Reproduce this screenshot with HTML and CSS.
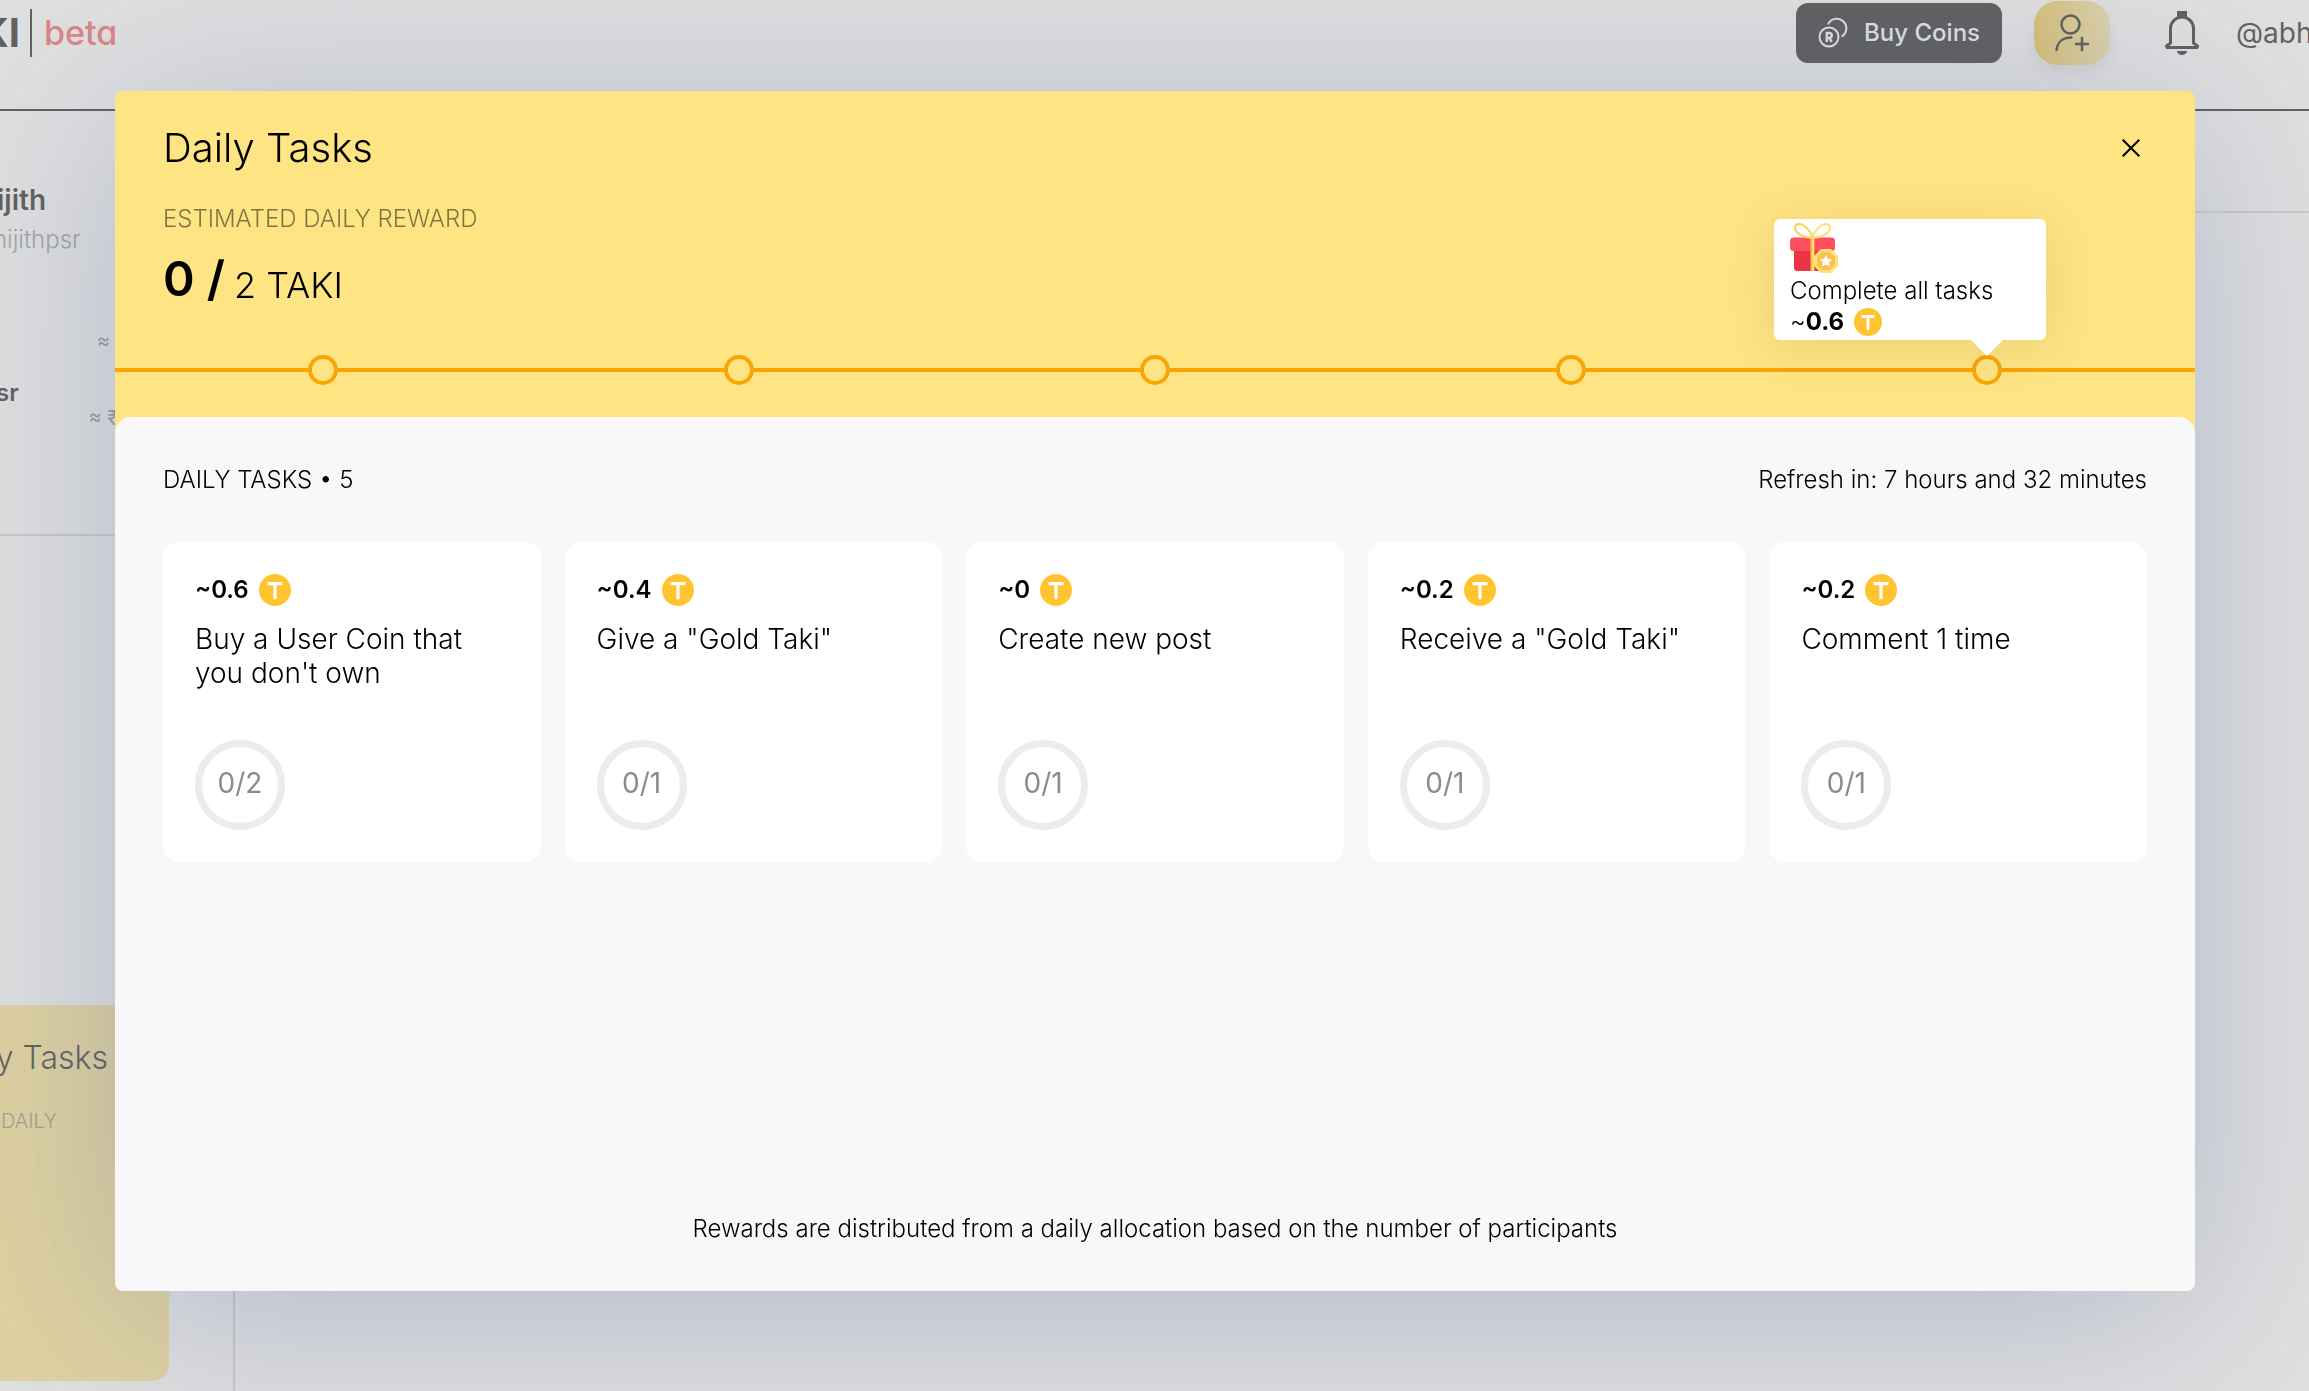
FILE: index.html
```html
<!DOCTYPE html>
<html lang="en">
<head>
    <meta charset="UTF-8">
    <meta name="viewport" content="width=device-width, initial-scale=1.0">
    <title>Taki - Daily Tasks</title>
    <link rel="stylesheet" href="styles.css">
</head>
<body>
    <svg class="sprite" aria-hidden="true">
        <symbol id="coin" viewBox="0 0 32 32">
            <circle cx="16" cy="16" r="16" fill="#ffc430"/>
            <path d="M8.5 9.7h15M16 9.7v15.5" fill="none" stroke="#fff" stroke-width="3.2"/>
        </symbol>
    </svg>
    <div class="page">
        <header class="topbar">
            <a href="#" class="brand">
                <span class="logo">TAKI</span>
                <span class="beta">beta</span>
            </a>
            <nav class="actions">
                <button type="button" class="buy">
                    <svg width="30" height="32" viewBox="0 0 30 32" fill="none" stroke="currentColor" stroke-width="2">
                        <circle cx="11" cy="20" r="9.5"/>
                        <path d="M10 7.300A9.600 9.600 0 1 1 23.500 19.600"/>
                        <path d="M8.800 25v-9h2.400a2.300 2.300 0 0 1 0 5H9M11.500 21l2.200 4" stroke-width="2.500"/>
                    </svg>
                    Buy Coins
                </button>
                <button type="button" class="invite" aria-label="Invite a friend">
                    <svg width="34" height="38" viewBox="0 0 34 38" fill="none" stroke="currentColor" stroke-width="2.500">
                        <circle cx="15.500" cy="10.500" r="9"/>
                        <path d="M1.500 37C2 28 8 23 17.500 23.500M27 23v14M20 30h14"/>
                    </svg>
                </button>
                <button type="button" class="bell" aria-label="Notifications">
                    <svg width="36" height="44" viewBox="0 0 36 44" fill="none" stroke="currentColor" stroke-width="3">
                        <path d="M2 36.500h32M2.500 36.500v-1.500l4-3V17.500a11.500 11.500 0 0 1 23 0V32l4 3v1.500"/>
                        <path d="M13 0h10v6H13zM13 40h10a5 4 0 0 1-10 0z" fill="currentColor" stroke="none"/>
                    </svg>
                </button>
                <a href="#" class="account">@abhijithpsr</a>
            </nav>
        </header>
        <div class="columns">
            <aside class="sidebar">
                <div class="profile">
                    <span class="avatar"></span>
                    <div>
                        <p class="name">Abhijith</p>
                        <p class="handle">@abhijithpsr</p>
                    </div>
                </div>
                <div class="balances">
                    <p class="fiat first">≈ ₹0.00</p>
                    <p class="coin-name">$abhijithpsr</p>
                    <p class="fiat">≈ ₹10.00</p>
                </div>
                <div class="teaser">
                    <h2><span class="teaser-icon"></span>Daily Tasks</h2>
                    <p>ESTIMATED DAILY REWARD</p>
                </div>
            </aside>
            <main class="feed">
                <div class="feed-head"></div>
            </main>
        </div>
    </div>

    <div class="overlay">
        <section class="modal" role="dialog" aria-labelledby="modal-title">
            <div class="modal-head">
                <div class="title-row">
                    <h1 id="modal-title">Daily Tasks</h1>
                    <button type="button" class="close" aria-label="Close">
                        <svg width="18" height="18" viewBox="0 0 18 18" stroke="currentColor" stroke-width="2">
                            <path d="M0.700 0.700l16.600 16.600M17.300 0.700L0.700 17.300"/>
                        </svg>
                    </button>
                </div>
                <p class="label">ESTIMATED DAILY REWARD</p>
                <p class="amount"><strong>0 /</strong><span>2 TAKI</span></p>
            </div>
            <div class="track">
                <div class="step"><span class="dot"></span></div>
                <div class="step"><span class="dot"></span></div>
                <div class="step"><span class="dot"></span></div>
                <div class="step"><span class="dot"></span></div>
                <div class="step">
                    <span class="dot"></span>
                    <div class="tooltip">
                        <svg class="gift" width="48" height="50" viewBox="0 0 48 50">
                            <path d="M4 26h38v19a3 3 0 0 1-3 3H7a3 3 0 0 1-3-3z" fill="#ea3544"/>
                            <rect x="0" y="14.500" width="45" height="13.500" rx="3.500" fill="#ff4f5e"/>
                            <path d="M20.500 14h4v34h-4z" fill="#fbc34e"/>
                            <path d="M22.500 14h1.500v34h-1.500z" fill="#ffe07d"/>
                            <path d="M22.500 14.500C17 15.500 6 11 5 5.500C4.500 0 11 0 15 3.500C19 7 22 12 22.500 14.500z" fill="none" stroke="#fbd75f" stroke-width="2.200"/>
                            <path d="M22.500 14.500C28 15.500 39 11 40 5.500C40.500 0 34 0 30 3.500C26 7 23 12 22.500 14.500z" fill="none" stroke="#ffe07d" stroke-width="2.200"/>
                            <path d="M31 26h10l7 7v10l-7 7H31l-7-7V33z" fill="#ffe07d"/>
                            <path d="M32 29h8l5 5v8l-5 5h-8l-5-5v-8z" fill="#fbc34e"/>
                            <path d="M36 32l1.900 3.700 4.100.700-3 2.900.700 4.200-3.700-2-3.700 2 .700-4.200-3-2.900 4.100-.700z" fill="#f4f9ff"/>
                        </svg>
                        <p>Complete all tasks</p>
                        <p class="tip-reward"><span>~<b>0.6</b></span><svg width="28" height="28"><use href="#coin"/></svg></p>
                    </div>
                </div>
            </div>
            <div class="modal-body">
                <div class="list-head">
                    <h2>DAILY TASKS • 5</h2>
                    <p>Refresh in: 7 hours and 32 minutes</p>
                </div>
                <ul class="tasks">
                    <li class="task">
                        <p class="reward">~0.6 <svg width="32" height="32"><use href="#coin"/></svg></p>
                        <h3>Buy a User Coin that you don't own</h3>
                        <span class="ring">0/2</span>
                    </li>
                    <li class="task">
                        <p class="reward">~0.4 <svg width="32" height="32"><use href="#coin"/></svg></p>
                        <h3>Give a "Gold Taki"</h3>
                        <span class="ring">0/1</span>
                    </li>
                    <li class="task">
                        <p class="reward">~0 <svg width="32" height="32"><use href="#coin"/></svg></p>
                        <h3>Create new post</h3>
                        <span class="ring">0/1</span>
                    </li>
                    <li class="task">
                        <p class="reward">~0.2 <svg width="32" height="32"><use href="#coin"/></svg></p>
                        <h3>Receive a "Gold Taki"</h3>
                        <span class="ring">0/1</span>
                    </li>
                    <li class="task">
                        <p class="reward">~0.2 <svg width="32" height="32"><use href="#coin"/></svg></p>
                        <h3>Comment 1 time</h3>
                        <span class="ring">0/1</span>
                    </li>
                </ul>
                <p class="note">Rewards are distributed from a daily allocation based on the number of participants</p>
            </div>
        </section>
    </div>
</body>
</html>
```
FILE: styles.css
```css
*
{
    box-sizing: border-box;
    margin: 0;
    padding: 0;
}
body
{
    font-family: Inter, "Liberation Sans", sans-serif;
    font-optical-sizing: none;
    font-size: 24px;
    font-weight: 350;
    line-height: 28px;
    color: #000;
    background: #fff;
    overflow: hidden;
}
h1, h2, h3
{
    font-weight: inherit;
}
button
{
    font: inherit;
    color: inherit;
    border: none;
    background: none;
    cursor: pointer;
}
a
{
    color: inherit;
    text-decoration: none;
}
svg
{
    display: block;
}
.sprite
{
    display: none;
}

/* page behind the dialog, wider than the window on both sides */
.page
{
    display: flex;
    flex-direction: column;
    height: 100vh;
    margin: 0 -200px;
}
.topbar
{
    display: flex;
    justify-content: space-between;
    padding: 0 108px 44px 127px;
    border-bottom: 2px solid #000;
}
.brand, .actions
{
    display: flex;
    align-items: center;
    height: 65px;
}
.logo
{
    font-size: 40px;
    font-weight: 700;
    line-height: 48px;
    padding-right: 10px;
    border-right: 2px solid #000;
}
.beta
{
    font-size: 34px;
    font-weight: 500;
    font-feature-settings: "cv11";
    color: #f04c4c;
    padding-left: 12px;
}
.buy
{
    display: flex;
    align-items: center;
    gap: 16px;
    height: 60px;
    padding: 0 22px;
    border-radius: 12px;
    font-weight: 500;
    color: #fff;
    background: #000;
}
.invite
{
    display: flex;
    align-items: center;
    justify-content: center;
    width: 76px;
    height: 64px;
    margin-left: 32px;
    border-radius: 24px;
    background: linear-gradient(90deg, #eec22c, #f6e29c);
    box-shadow: 0 8px 16px rgba(0, 0, 0, .1);
}
.bell
{
    margin-left: 54px;
}
.account
{
    margin-left: 36px;
    font-size: 28px;
    font-weight: 400;
}
.columns
{
    display: flex;
    flex: 1;
}
.sidebar
{
    display: flex;
    flex-direction: column;
    width: 435px;
    padding-top: 71px;
    border-right: 2px solid #d0d0d0;
}
.profile
{
    display: flex;
    gap: 22px;
    padding: 0 64px;
}
.avatar
{
    width: 56px;
    height: 56px;
    border-radius: 50%;
    background: #ddd;
}
.name
{
    font-size: 28px;
    font-weight: 600;
    line-height: 36px;
}
.handle
{
    line-height: 44px;
    color: #888;
}
.balances
{
    padding: 68px 64px 104px;
    border-bottom: 2px solid #d0d0d0;
}
.fiat
{
    font-size: 20px;
    line-height: 24px;
    font-weight: 400;
    text-align: right;
    color: #777;
}
.first
{
    margin-bottom: 26px;
}
.coin-name
{
    padding-left: 16px;
    font-weight: 600;
    line-height: 26px;
}
.teaser
{
    height: 376px;
    margin: auto 64px 10px;
    padding: 32px 20px;
    border-radius: 16px;
    background: #ffe382;
}
.teaser h2
{
    display: flex;
    align-items: center;
    gap: 24px;
    font-size: 32px;
    line-height: 42px;
    white-space: nowrap;
}
.teaser-icon
{
    width: 32px;
    height: 32px;
    border-radius: 50%;
    background: #ffc430;
}
.teaser p
{
    width: 200px;
    margin-top: 30px;
    font-size: 20px;
    line-height: 24px;
    color: #888060;
}
.feed
{
    flex: 1;
}
.feed-head
{
    height: 102px;
    border-bottom: 2px solid #d8d8d8;
}

.overlay
{
    position: fixed;
    inset: 0;
    display: flex;
    padding: 91px 114px 100px 115px;
    background: rgba(194, 194, 194, .5);
}
.modal
{
    display: flex;
    flex-direction: column;
    flex: 1;
    border-radius: 8px;
    background: #fee483;
    box-shadow: 0 24px 200px rgba(70, 94, 150, .31);
}
.modal-head
{
    padding: 33px 48px 0;
}
.title-row
{
    display: flex;
    align-items: center;
    justify-content: space-between;
}
h1
{
    font-size: 40px;
    line-height: 48px;
}
.close
{
    display: flex;
    align-items: center;
    justify-content: center;
    width: 32px;
    height: 32px;
}
.label
{
    margin-top: 33px;
    color: rgba(0, 0, 0, .5);
}
.amount
{
    display: flex;
    align-items: flex-end;
    gap: 9px;
    margin-top: 18px;
}
.amount strong
{
    font-size: 48px;
    font-weight: 600;
    line-height: 56px;
}
.amount span
{
    font-size: 36px;
    line-height: 44px;
}
.track
{
    display: grid;
    grid-template-columns: repeat(5, 1fr);
    margin: 48px 0 32px;
    background: linear-gradient(#faa506, #faa506) center / 100% 4px no-repeat;
}
.step
{
    position: relative;
    display: flex;
    justify-content: center;
}
.dot
{
    width: 30px;
    height: 30px;
    border: 4px solid #faa506;
    border-radius: 50%;
    background: #fee483;
}
.tooltip
{
    position: absolute;
    left: calc(50% - 213px);
    bottom: calc(100% + 15px);
    width: 272px;
    padding: 4px 16px;
    border-radius: 6px;
    background: #fff;
    box-shadow: 0 8px 48px rgba(130, 100, 60, .16);
}
.tooltip::after
{
    content: "";
    position: absolute;
    top: 100%;
    left: 197px;
    border: 16px solid transparent;
    border-top-color: #fff;
    border-bottom: none;
}
.gift
{
    margin-bottom: 4px;
}
.tip-reward
{
    display: flex;
    gap: 10px;
    margin-top: 3px;
}
.tip-reward b
{
    font-weight: 700;
}
.modal-body
{
    display: flex;
    flex-direction: column;
    flex: 1;
    padding: 49px 48px 48px;
    border-radius: 16px 16px 8px 8px;
    background: #f8f8f8;
}
.list-head
{
    display: flex;
    justify-content: space-between;
}
.list-head h2
{
    font-size: 24px;
}
.tasks
{
    display: grid;
    grid-template-columns: repeat(5, 1fr);
    gap: 24px;
    margin-top: 48px;
    list-style: none;
}
.task
{
    display: flex;
    flex-direction: column;
    min-height: 320px;
    padding: 32px;
    border-radius: 16px;
    background: #fff;
}
.reward
{
    display: flex;
    align-items: center;
    gap: 10px;
    font-weight: 600;
}
.task h3
{
    margin: 16px 0;
    font-size: 28px;
    line-height: 34px;
}
.ring
{
    width: 90px;
    height: 90px;
    margin-top: auto;
    border: 7px solid #ececec;
    border-radius: 50%;
    font-size: 28px;
    font-weight: 400;
    line-height: 72px;
    text-align: center;
    color: #8a8a90;
}
.note
{
    margin-top: auto;
    text-align: center;
}
```
